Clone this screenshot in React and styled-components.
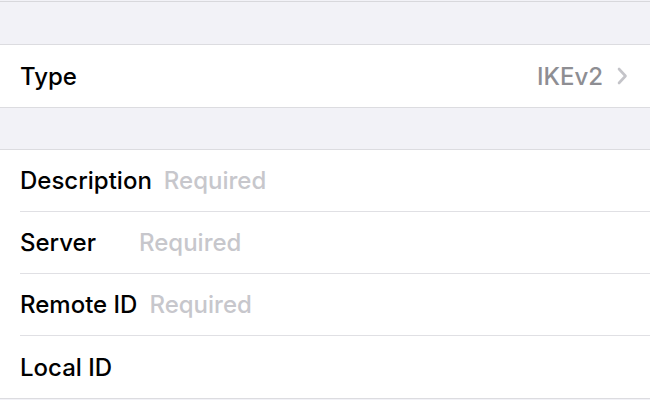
import React from "react";
import styled, { createGlobalStyle } from "styled-components";

const GlobalStyle = createGlobalStyle`
  html, body {
    margin: 0;
    padding: 0;
    background: #f2f2f7;
    font-family: Inter, "Liberation Sans", sans-serif;
    -webkit-font-smoothing: antialiased;
  }
`;

const Page = styled.div`
  width: 650px;
  height: 400px;
  overflow: hidden;
  background: #f2f2f7;
  border-top: 1px solid #d8d8dc;
  margin-top: 1px;
`;

const Spacer = styled.div`
  height: ${(p) => p.h}px;
`;

const Group = styled.div`
  background: #fff;
  border-top: 1px solid #dcdce0;
  border-bottom: 1px solid #dcdce0;
`;

const Row = styled.div`
  display: flex;
  align-items: center;
  height: 61px;
  margin-left: 20px;
  padding-right: 22px;
  & + & {
    border-top: 1px solid #e0e0e4;
  }
  &:last-child {
    height: 62px;
  }
`;

const Label = styled.span`
  font-size: 24px;
  font-weight: 500;
  color: #000;
  min-width: ${(p) => (p.wide ? "107px" : "auto")};
  margin-right: 12px;
`;

const Placeholder = styled.span`
  font-size: 24px;
  font-weight: 500;
  color: #c7c7cc;
`;

const Value = styled.span`
  margin-left: auto;
  font-size: 24px;
  font-weight: 500;
  color: #8e8e93;
`;

const Chevron = () => (
  <svg width="12" height="18" viewBox="0 0 12 18" style={{ marginLeft: 13 }}>
    <path d="M3 2 L9.5 9 L3 16" fill="none" stroke="#c4c4c9" strokeWidth="2.6" strokeLinecap="round" strokeLinejoin="round" />
  </svg>
);

const fields = [
  { label: "Description", placeholder: "Required" },
  { label: "Server", placeholder: "Required" },
  { label: "Remote ID", placeholder: "Required" },
  { label: "Local ID", placeholder: "" },
];

export default function App() {
  return (
    <>
      <GlobalStyle />
      <Page>
        <Spacer h={42} />
        <Group>
          <Row>
            <Label>Type</Label>
            <Value>IKEv2</Value>
            <Chevron />
          </Row>
        </Group>
        <Spacer h={41} />
        <Group>
          {fields.map((f) => (
            <Row key={f.label}>
              <Label wide>{f.label}</Label>
              <Placeholder>{f.placeholder}</Placeholder>
            </Row>
          ))}
        </Group>
      </Page>
    </>
  );
}
